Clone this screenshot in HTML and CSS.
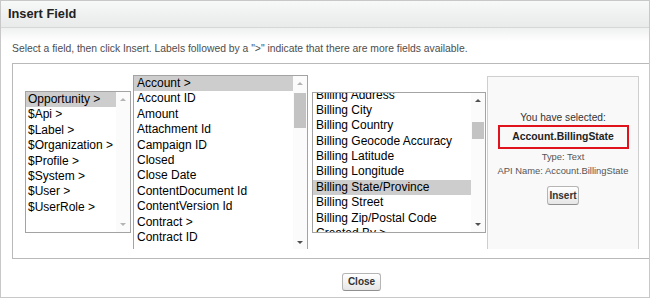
FILE: index.html
```html
<!DOCTYPE html>
<html>
<head>
<meta charset="utf-8">
<title>Insert Field</title>
<link rel="stylesheet" href="styles.css">
</head>
<body>
<div class="dialog">
  <div class="header"><h1 class="title">Insert Field</h1></div>
  <div class="body">
    <p class="hint">Select a field, then click Insert. Labels followed by a "&gt;" indicate that there are more fields available.</p>
    <div class="picker">
      <div class="picker-inner">
        <div class="list list-root">
          <div class="opts">
            <div class="opt sel">Opportunity &gt;</div>
            <div class="opt">$Api &gt;</div>
            <div class="opt">$Label &gt;</div>
            <div class="opt">$Organization &gt;</div>
            <div class="opt">$Profile &gt;</div>
            <div class="opt">$System &gt;</div>
            <div class="opt">$User &gt;</div>
            <div class="opt">$UserRole &gt;</div>
          </div>
          <div class="sb">
            <div class="arr"><span class="up dis"></span></div>
            <div class="track"></div>
            <div class="arr"><span class="down dis"></span></div>
          </div>
        </div>
        <div class="list list-fields">
          <div class="opts">
            <div class="opt sel">Account &gt;</div>
            <div class="opt">Account ID</div>
            <div class="opt">Amount</div>
            <div class="opt">Attachment Id</div>
            <div class="opt">Campaign ID</div>
            <div class="opt">Closed</div>
            <div class="opt">Close Date</div>
            <div class="opt">ContentDocument Id</div>
            <div class="opt">ContentVersion Id</div>
            <div class="opt">Contract &gt;</div>
            <div class="opt">Contract ID</div>
          </div>
          <div class="sb">
            <div class="arr"><span class="up dis"></span></div>
            <div class="thumb thumb-fields"></div>
            <div class="track"></div>
            <div class="arr"><span class="down"></span></div>
          </div>
        </div>
        <div class="list list-sub">
          <div class="opts">
            <div class="opts-scroll">
              <div class="opt">Billing Address</div>
              <div class="opt">Billing City</div>
              <div class="opt">Billing Country</div>
              <div class="opt">Billing Geocode Accuracy</div>
              <div class="opt">Billing Latitude</div>
              <div class="opt">Billing Longitude</div>
              <div class="opt sel">Billing State/Province</div>
              <div class="opt">Billing Street</div>
              <div class="opt">Billing Zip/Postal Code</div>
              <div class="opt">Created By &gt;</div>
            </div>
          </div>
          <div class="sb">
            <div class="arr"><span class="up"></span></div>
            <div class="thumb thumb-sub"></div>
            <div class="track"></div>
            <div class="arr"><span class="down"></span></div>
          </div>
        </div>
        <div class="panel">
          <div class="sel-label">You have selected:</div>
          <div class="sel-name">Account.BillingState</div>
          <div class="meta">Type: Text</div>
          <div class="meta">API Name: Account.BillingState</div>
          <button class="btn btn-insert" type="button">Insert</button>
        </div>
      </div>
    </div>
    <div class="footer"><button class="btn btn-close" type="button">Close</button></div>
  </div>
</div>
</body>
</html>
```

FILE: styles.css
```css
* { box-sizing: border-box; }
html, body { margin: 0; padding: 0; background: #fff; }
body { font-family: "Liberation Sans", Arial, sans-serif; }

.dialog {
  width: 650px;
  height: 298px;
  border: 1px solid #c8c8c8;
  display: flex;
  flex-direction: column;
  overflow: hidden;
}

.header {
  height: 27px;
  border-bottom: 1px solid #d6d8d8;
  background: linear-gradient(#f7f8f8, #e9ebeb);
  padding-left: 7px;
}
.title {
  margin: 0;
  font-size: 12.8px;
  line-height: 26px;
  font-weight: bold;
  color: #222;
}

.body {
  flex: 1;
  padding: 15px 0 0 11px;
  background: linear-gradient(#eff0f0, #ffffff 13px);
}
.hint {
  margin: 0;
  font-size: 10.35px;
  line-height: 12px;
  color: #4d4d4d;
}

.picker {
  margin-top: 8px;
  border: 1px solid #b9b9b9;
  border-right: none;
  height: 196px;
  padding: 11px 0 0 12px;
}
.picker-inner {
  height: 174px;
  overflow: hidden;
  display: flex;
  align-items: center;
}

.list {
  display: flex;
  border: 1px solid #a3a3a3;
  background: #fff;
  font-size: 12px;
  color: #000;
}
.list-root { width: 106px; height: 142px; margin-right: 2px; }
.list-fields { width: 175px; height: 176px; align-self: flex-start; margin-right: 4px; }
.list-sub { width: 174px; height: 141px; }

.opts { flex: 1; overflow: hidden; min-width: 0; }
.opts-scroll { margin-top: -5px; }
.opt {
  height: 15.4px;
  line-height: 15.4px;
  padding: 0 2px;
  white-space: nowrap;
}
.list-fields .opt, .list-sub .opt { padding-left: 3px; }
.opt.sel { background: #cdcdcd; }

.sb {
  width: 14px;
  display: flex;
  flex-direction: column;
  background: #fbfbfb;
}
.arr {
  height: 15px;
  display: flex;
  align-items: center;
  justify-content: center;
}
.arr .up, .arr .down {
  width: 0;
  height: 0;
  border-left: 3px solid transparent;
  border-right: 3px solid transparent;
}
.arr .up { border-bottom: 3px solid #505050; }
.arr .down { border-top: 3px solid #505050; }
.arr .up.dis { border-bottom-color: #b4b4b4; }
.arr .down.dis { border-top-color: #b4b4b4; }
.track { flex: 1; }
.thumb { margin: 0 1px; background: #c3c3c3; }
.thumb-fields { margin-top: 2px; height: 35px; }
.thumb-sub { margin-top: 14px; height: 17px; }

.panel {
  align-self: stretch;
  margin: 1px 0 0 1px;
  width: 152px;
  border: 1px solid #cfcfcf;
  border-bottom: none;
  background: #f9f9f9;
  padding-top: 35px;
  display: flex;
  flex-direction: column;
  align-items: center;
  color: #333;
}
.sel-label { font-size: 10.2px; line-height: 12px; color: #333; }
.sel-name {
  margin-top: 1px;
  width: 131px;
  height: 24px;
  border: 2px solid #e0121b;
  text-align: center;
  font-size: 10.4px;
  line-height: 20px;
  font-weight: bold;
  color: #222;
}
.meta { font-size: 9.4px; line-height: 14px; color: #555; }
.sel-name + .meta { margin-top: 1px; }

.btn {
  font-family: "Liberation Sans", Arial, sans-serif;
  font-weight: bold;
  font-size: 10px;
  color: #333;
  border: 1px solid #b5b5b5;
  border-bottom-color: #8f8f8f;
  border-radius: 3px;
  background: linear-gradient(#ffffff, #e6e6e6);
  padding: 0;
  margin: 0;
}
.btn-insert { margin-top: 8px; width: 32px; height: 19px; }

.footer { padding: 12px 0 0 330px; }
.btn-close { width: 39px; height: 18px; }
```
